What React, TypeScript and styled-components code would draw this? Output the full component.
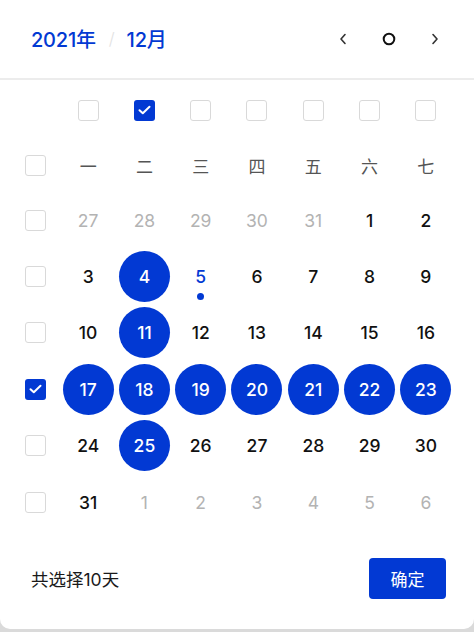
import React, { useState } from 'react';
import styled, { createGlobalStyle } from 'styled-components';

const BLUE = '#0239d3';

const GlobalStyle = createGlobalStyle`
  html, body {
    margin: 0;
    padding: 0;
    background: #dadada;
  }
  body {
    font-family: Inter, "Noto Sans CJK SC", "Noto Sans", sans-serif;
    -webkit-font-smoothing: antialiased;
  }
`;

type Day = { n: number; other?: boolean; today?: boolean };

const weekdays = ['一', '二', '三', '四', '五', '六', '七'];

const weeks: Day[][] = [
  [{ n: 27, other: true }, { n: 28, other: true }, { n: 29, other: true }, { n: 30, other: true }, { n: 31, other: true }, { n: 1 }, { n: 2 }],
  [{ n: 3 }, { n: 4 }, { n: 5, today: true }, { n: 6 }, { n: 7 }, { n: 8 }, { n: 9 }],
  [{ n: 10 }, { n: 11 }, { n: 12 }, { n: 13 }, { n: 14 }, { n: 15 }, { n: 16 }],
  [{ n: 17 }, { n: 18 }, { n: 19 }, { n: 20 }, { n: 21 }, { n: 22 }, { n: 23 }],
  [{ n: 24 }, { n: 25 }, { n: 26 }, { n: 27 }, { n: 28 }, { n: 29 }, { n: 30 }],
  [{ n: 31 }, { n: 1, other: true }, { n: 2, other: true }, { n: 3, other: true }, { n: 4, other: true }, { n: 5, other: true }, { n: 6, other: true }],
];

const selected = new Set([4, 11, 17, 18, 19, 20, 21, 22, 23, 25]);

function Check({ checked }: { checked?: boolean }) {
  return (
    <Box $checked={checked}>
      {checked ? (
        <svg width="13" height="10" viewBox="0 0 13 10">
          <path d="M1.5 5.2 L4.8 8.3 L11.5 1.7" fill="none" stroke="#fff" strokeWidth="2" strokeLinecap="round" strokeLinejoin="round" />
        </svg>
      ) : null}
    </Box>
  );
}

export default function App() {
  const [count] = useState(selected.size);

  return (
    <>
      <GlobalStyle />
      <Panel>
        <Header>
          <Title>
            <span>2021年</span>
            <Slash>/</Slash>
            <span>12月</span>
          </Title>
          <Nav>
            <NavButton>
              <svg width="8" height="12" viewBox="0 0 8 12">
                <path d="M6 1.5 L2 6 L6 10.5" fill="none" stroke="#333" strokeWidth="1.6" strokeLinecap="round" strokeLinejoin="round" />
              </svg>
            </NavButton>
            <NavButton>
              <svg width="14" height="14" viewBox="0 0 14 14">
                <circle cx="7" cy="7" r="5.3" fill="none" stroke="#111" strokeWidth="2" />
              </svg>
            </NavButton>
            <NavButton>
              <svg width="8" height="12" viewBox="0 0 8 12">
                <path d="M2 1.5 L6 6 L2 10.5" fill="none" stroke="#333" strokeWidth="1.6" strokeLinecap="round" strokeLinejoin="round" />
              </svg>
            </NavButton>
          </Nav>
        </Header>

        <Grid>
          <Row $h={56}>
            <Side />
            {weekdays.map((w, i) => (
              <Cell key={w}>
                <Check checked={i === 1} />
              </Cell>
            ))}
          </Row>
          <Row $h={54}>
            <Side>
              <Check />
            </Side>
            {weekdays.map(w => (
              <Cell key={w}>
                <Weekday>{w}</Weekday>
              </Cell>
            ))}
          </Row>
          {weeks.map((week, wi) => (
            <Row key={wi} $h={56.4}>
              <Side>
                <Check checked={wi === 3} />
              </Side>
              {week.map((d, di) => {
                const on = !d.other && selected.has(d.n);
                return (
                  <Cell key={di}>
                    <DayNum $selected={on} $other={d.other} $today={d.today}>
                      {d.n}
                      {d.today ? <TodayDot /> : null}
                    </DayNum>
                  </Cell>
                );
              })}
            </Row>
          ))}
        </Grid>

        <Footer>
          <Summary>共选择{count}天</Summary>
          <Confirm>确定</Confirm>
        </Footer>
      </Panel>
    </>
  );
}

const Panel = styled.div`
  width: 474px;
  height: 629px;
  background: #fff;
  border-radius: 0 0 10px 10px;
  display: flex;
  flex-direction: column;
  overflow: hidden;
`;

const Header = styled.div`
  height: 80px;
  flex-shrink: 0;
  box-sizing: border-box;
  padding: 0 32px 0 31px;
  display: flex;
  align-items: center;
  justify-content: space-between;
  border-bottom: 2px solid #ececec;
`;

const Title = styled.div`
  display: flex;
  align-items: center;
  font-size: 20px;
  font-weight: 500;
  color: ${BLUE};
  letter-spacing: -0.2px;
  padding-bottom: 1px;
`;

const Slash = styled.span`
  color: #e2e2e2;
  font-weight: 300;
  margin: 0 12px 0 13px;
  font-size: 17px;
`;

const Nav = styled.div`
  display: flex;
  align-items: center;
  gap: 32px;
`;

const NavButton = styled.div`
  width: 14px;
  height: 14px;
  display: flex;
  align-items: center;
  justify-content: center;
`;

const Grid = styled.div`
  display: flex;
  flex-direction: column;
  padding: 2px 20px 0 25px;
`;

const Row = styled.div<{ $h: number }>`
  display: grid;
  grid-template-columns: 35px repeat(7, 1fr);
  height: ${p => p.$h}px;
  align-items: center;
`;

const Side = styled.div`
  display: flex;
  align-items: center;
`;

const Cell = styled.div`
  display: flex;
  align-items: center;
  justify-content: center;
`;

const Box = styled.div<{ $checked?: boolean }>`
  width: 21px;
  height: 21px;
  box-sizing: border-box;
  border-radius: 3px;
  border: ${p => (p.$checked ? 'none' : '1.5px solid #d9d9d9')};
  background: ${p => (p.$checked ? BLUE : '#fff')};
  display: flex;
  align-items: center;
  justify-content: center;
`;

const Weekday = styled.span`
  font-size: 17px;
  color: #555;
`;

const DayNum = styled.div<{ $selected?: boolean; $other?: boolean; $today?: boolean }>`
  position: relative;
  width: 51px;
  height: 51px;
  border-radius: 50%;
  display: flex;
  align-items: center;
  justify-content: center;
  font-size: 17.5px;
  font-weight: 500;
  background: ${p => (p.$selected ? BLUE : 'transparent')};
  color: ${p => (p.$selected ? '#fff' : p.$today ? BLUE : p.$other ? '#b3b3b3' : '#111')};
  ${p => (p.$other ? 'font-weight: 400;' : '')}
`;

const TodayDot = styled.span`
  position: absolute;
  left: 50%;
  top: 42px;
  width: 7px;
  height: 7px;
  margin-left: -3.5px;
  border-radius: 50%;
  background: ${BLUE};
`;

const Footer = styled.div`
  flex: 1;
  display: flex;
  align-items: center;
  justify-content: space-between;
  padding: 0 28px 2px 31px;
`;

const Summary = styled.span`
  font-size: 17.5px;
  color: #1a1a1a;
`;

const Confirm = styled.button`
  width: 77px;
  height: 41px;
  border: none;
  border-radius: 4px;
  background: ${BLUE};
  color: #fff;
  font-family: inherit;
  font-size: 17px;
  cursor: pointer;
`;
